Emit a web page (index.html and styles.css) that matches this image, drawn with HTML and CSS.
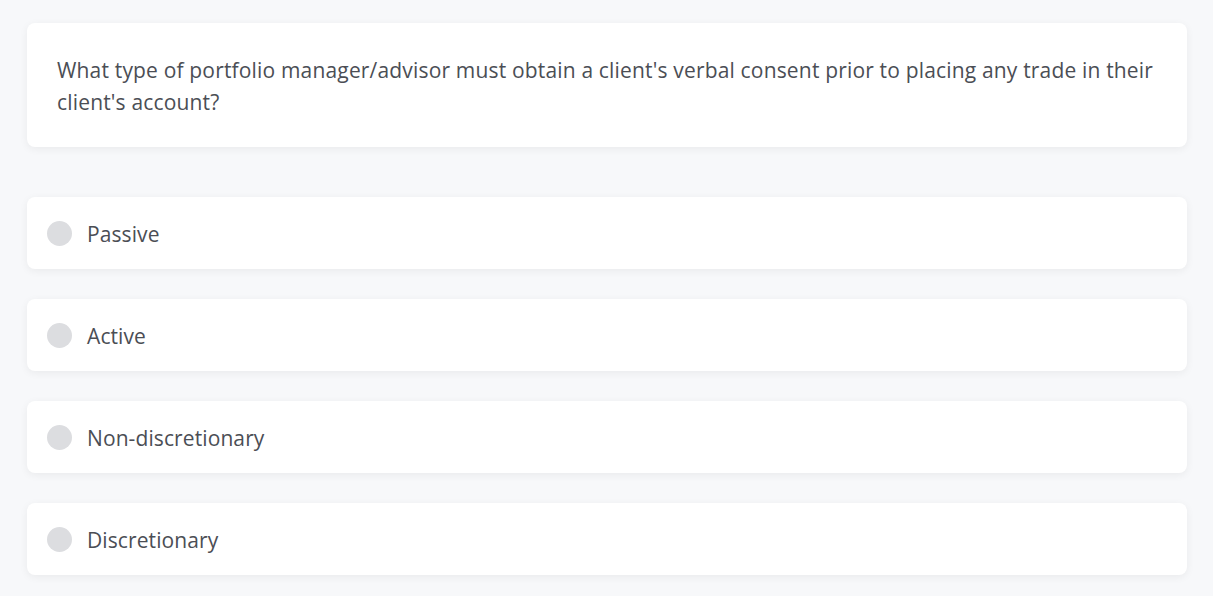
FILE: index.html
```html
<!DOCTYPE html>
<html>
<head>
<meta charset="utf-8">
<link rel="stylesheet" href="styles.css">
</head>
<body>
<main class="quiz">
  <section class="question-card">
    <p class="question-text">What type of portfolio manager/advisor must obtain a client's verbal consent prior to placing any trade in their client's account?</p>
  </section>
  <ul class="options">
    <li class="option"><span class="radio"></span><span class="option-label">Passive</span></li>
    <li class="option"><span class="radio"></span><span class="option-label">Active</span></li>
    <li class="option"><span class="radio"></span><span class="option-label">Non-discretionary</span></li>
    <li class="option"><span class="radio"></span><span class="option-label">Discretionary</span></li>
  </ul>
</main>
</body>
</html>
```
FILE: styles.css
```css
* { box-sizing: border-box; }
html, body { margin: 0; padding: 0; }
body {
  background: #f7f8fa;
  font-family: "Open Sans", "Noto Sans", sans-serif;
  color: #4b4e55;
}
.quiz {
  padding: 23px 26px 20px 27px;
  display: flex;
  flex-direction: column;
  gap: 50px;
}
.question-card {
  background: #fff;
  border-radius: 8px;
  box-shadow: 0 2px 8px rgba(0,0,0,0.06);
  padding: 31px 30px 29px 30px;
}
.question-text {
  margin: 0;
  font-size: 21px;
  line-height: 32px;
  letter-spacing: 0.17px;
}
.options {
  list-style: none;
  margin: 0;
  padding: 0;
  display: flex;
  flex-direction: column;
  gap: 30px;
}
.option {
  background: #fff;
  border-radius: 8px;
  box-shadow: 0 2px 8px rgba(0,0,0,0.06);
  height: 72px;
  padding: 0 20px;
  display: flex;
  align-items: center;
  gap: 15px;
}
.radio {
  width: 25px;
  height: 25px;
  border-radius: 50%;
  background: #dcdde0;
  flex: none;
}
.option-label {
  font-size: 21px;
  line-height: 32px;
  padding-top: 2px;
  letter-spacing: 0.1px;
}
```
